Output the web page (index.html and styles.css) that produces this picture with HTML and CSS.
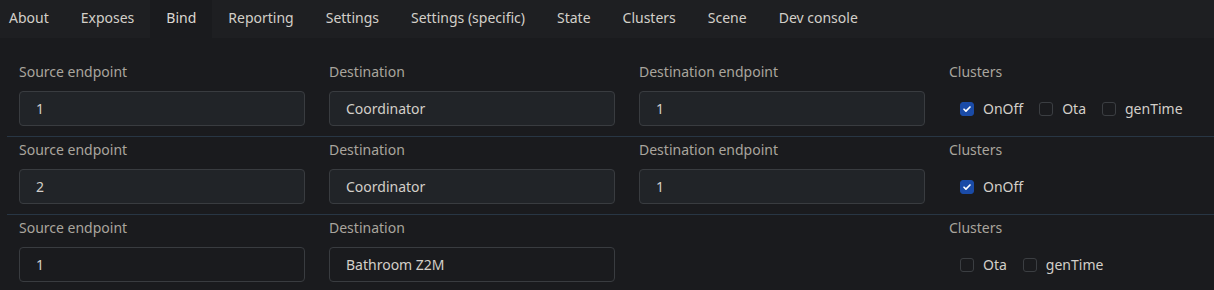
FILE: index.html
```html
<!DOCTYPE html>
<html>
<head>
<meta charset="utf-8">
<link rel="stylesheet" href="styles.css">
</head>
<body>
<nav class="tabs">
  <a class="tab">About</a>
  <a class="tab">Exposes</a>
  <a class="tab active">Bind</a>
  <a class="tab">Reporting</a>
  <a class="tab">Settings</a>
  <a class="tab">Settings (specific)</a>
  <a class="tab">State</a>
  <a class="tab">Clusters</a>
  <a class="tab">Scene</a>
  <a class="tab">Dev console</a>
</nav>
<main class="binds">
  <div class="row">
    <div class="col"><div class="lbl">Source endpoint</div><div class="input">1</div></div>
    <div class="col"><div class="lbl">Destination</div><div class="input">Coordinator</div></div>
    <div class="col"><div class="lbl">Destination endpoint</div><div class="input">1</div></div>
    <div class="col"><div class="lbl">Clusters</div>
      <div class="checks">
        <label class="chk"><span class="box on"><svg viewBox="0 0 16 16" width="14" height="14"><path d="M4 8.3l2.6 2.5L12 5.3" fill="none" stroke="#fff" stroke-width="2.2" stroke-linecap="round" stroke-linejoin="round"/></svg></span>OnOff</label>
        <label class="chk"><span class="box"></span>Ota</label>
        <label class="chk"><span class="box"></span>genTime</label>
      </div>
    </div>
  </div>
  <div class="row">
    <div class="col"><div class="lbl">Source endpoint</div><div class="input">2</div></div>
    <div class="col"><div class="lbl">Destination</div><div class="input">Coordinator</div></div>
    <div class="col"><div class="lbl">Destination endpoint</div><div class="input">1</div></div>
    <div class="col"><div class="lbl">Clusters</div>
      <div class="checks">
        <label class="chk"><span class="box on"><svg viewBox="0 0 16 16" width="14" height="14"><path d="M4 8.3l2.6 2.5L12 5.3" fill="none" stroke="#fff" stroke-width="2.2" stroke-linecap="round" stroke-linejoin="round"/></svg></span>OnOff</label>
      </div>
    </div>
  </div>
  <div class="row">
    <div class="col"><div class="lbl">Source endpoint</div><div class="input dark">1</div></div>
    <div class="col"><div class="lbl">Destination</div><div class="input dark">Bathroom Z2M</div></div>
    <div class="col"></div>
    <div class="col"><div class="lbl">Clusters</div>
      <div class="checks">
        <label class="chk"><span class="box"></span>Ota</label>
        <label class="chk"><span class="box"></span>genTime</label>
      </div>
    </div>
  </div>
</main>
</body>
</html>
```
FILE: styles.css
```css
html, body {
  margin: 0;
  padding: 0;
  background: #1a1b1e;
  overflow: hidden;
}
body {
  font-family: "Noto Sans", "Open Sans", sans-serif;
  font-size: 14px;
  color: #d3cfc9;
  width: 1214px;
  height: 290px;
}
.tabs {
  display: flex;
  height: 38px;
  background: #1e1f22;
  padding-left: 0;
}
.tab {
  display: flex;
  align-items: center;
  padding: 0 16px 4px 9px;
  margin-right: 7px;
  color: #d3cfc9;
  white-space: nowrap;
}
.tab.active {
  background: #1a1b1e;
  padding-left: 16px;
  margin-left: -7px;
  color: #dcd8d2;
}
.binds {
  padding: 20px 0 0 7px;
}
.row {
  display: grid;
  grid-template-columns: repeat(4, 310px);
  padding: 3px 0 10px;
  border-top: 1px solid #283644;
  width: 1240px;
}
.row:first-child {
  border-top-color: transparent;
}
.col {
  padding: 0 12px;
  display: flex;
  flex-direction: column;
}
.lbl {
  height: 22px;
  line-height: 20px;
  color: #a9a59d;
  margin-bottom: 7px;
}
.input {
  box-sizing: border-box;
  height: 35px;
  border: 1px solid #393c40;
  border-radius: 4px;
  background: #212428;
  padding: 0 16px;
  display: flex;
  align-items: center;
  color: #d3cfc9;
}
.input.dark {
  background: #1a1b1e;
}
.checks {
  display: flex;
  height: 35px;
  align-items: center;
  padding-left: 11px;
  gap: 16px;
}
.chk {
  display: flex;
  align-items: center;
  gap: 9px;
  color: #d3cfc9;
}
.box {
  box-sizing: border-box;
  width: 14px;
  height: 14px;
  border: 1px solid #3b3e42;
  border-radius: 3px;
  display: flex;
  align-items: center;
  justify-content: center;
}
.box.on {
  background: #1a4ba7;
  border-color: #1a4ba7;
}
```
